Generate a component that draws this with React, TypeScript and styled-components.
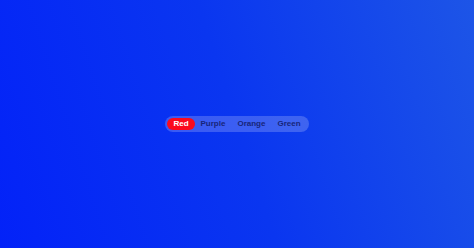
import { useState } from 'react';
import styled, { createGlobalStyle } from 'styled-components';

const GlobalStyle = createGlobalStyle`
	html, body, #root {
		margin: 0;
		height: 100%;
	}
	body {
		font-family: 'Liberation Sans', Arial, sans-serif;
	}
`;

const Page = styled.div`
	height: 100%;
	display: flex;
	align-items: center;
	justify-content: center;
	background: linear-gradient(72deg, #0322f8 0%, #0a36f0 50%, #1d55e7 100%);
`;

const Switcher = styled.div`
	display: flex;
	align-items: center;
	padding: 2px;
	border-radius: 8px;
	background: rgba(255, 255, 255, 0.2);
`;

const Option = styled.button<{ $active: boolean }>`
	border: none;
	height: 12px;
	padding: 0 6px;
	border-radius: 6px;
	font-family: inherit;
	font-size: 8px;
	font-weight: 700;
	line-height: 12px;
	cursor: pointer;
	background: ${(p) => (p.$active ? '#fb0a1e' : 'transparent')};
	color: ${(p) => (p.$active ? '#ffffff' : '#17257a')};
`;

const colors = ['Red', 'Purple', 'Orange', 'Green'];

const App = () => {
	const [selected, setSelected] = useState('Red');

	return (
		<>
			<GlobalStyle />
			<Page>
				<Switcher>
					{colors.map((color) => (
						<Option
							key={color}
							$active={color === selected}
							onClick={() => setSelected(color)}
						>
							{color}
						</Option>
					))}
				</Switcher>
			</Page>
		</>
	);
};

export default App;
